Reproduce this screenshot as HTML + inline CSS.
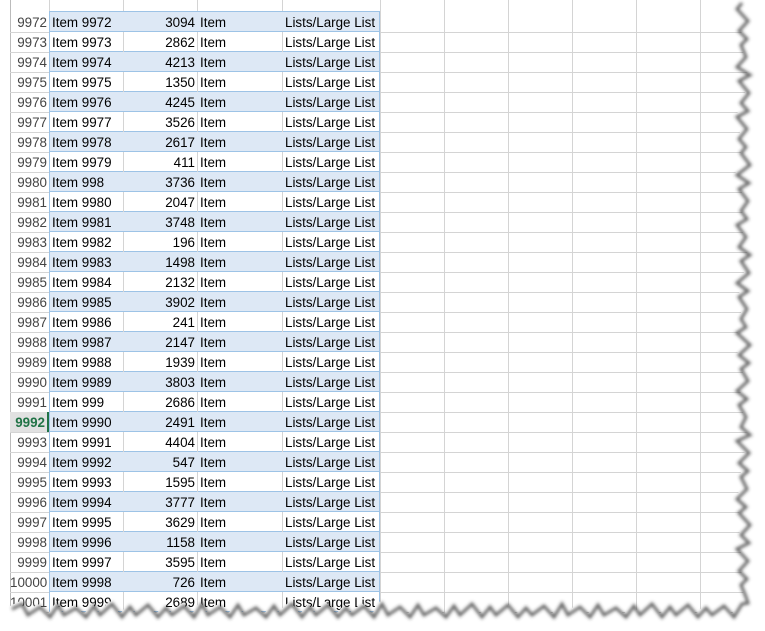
<!DOCTYPE html><html><head><style>
body{margin:0;width:765px;height:631px;background:#fff;position:relative;overflow:hidden;font-family:"Liberation Sans",sans-serif;font-size:13.4px;color:#000}
.c{position:absolute;height:20px;line-height:21px;box-sizing:border-box;white-space:nowrap;overflow:hidden}
.v{position:absolute;top:0;width:1px;height:631px;background:#d4d4d4}
.h{position:absolute;left:10px;width:740px;height:1px;background:#d4d4d4}
</style></head><body>
<div id="g"></div>
<svg width="765" height="631" style="position:absolute;left:0;top:0">
<defs><filter id="s" x="-10%" y="-10%" width="120%" height="120%"><feGaussianBlur stdDeviation="1.6"/></filter></defs>
<path id="mask" fill="#fff" fill-rule="evenodd" d=""/>
<path id="sh" fill="none" stroke="#333" stroke-width="3" stroke-opacity="0.75" filter="url(#s)" transform="translate(2,3)" d=""/>
</svg>
<script>
var g=document.getElementById('g'),h='';
var xs=[49,123,197,282,380,444,508,572,636,700];
xs.forEach(function(x){h+='<div class="v" style="left:'+x+'px"></div>'});
h+='<div class="v" style="left:10px;background:#bbb"></div>';
var data=[[9972,'Item 9972',3094],[9973,'Item 9973',2862],[9974,'Item 9974',4213],[9975,'Item 9975',1350],[9976,'Item 9976',4245],[9977,'Item 9977',3526],[9978,'Item 9978',2617],[9979,'Item 9979',411],[9980,'Item 998',3736],[9981,'Item 9980',2047],[9982,'Item 9981',3748],[9983,'Item 9982',196],[9984,'Item 9983',1498],[9985,'Item 9984',2132],[9986,'Item 9985',3902],[9987,'Item 9986',241],[9988,'Item 9987',2147],[9989,'Item 9988',1939],[9990,'Item 9989',3803],[9991,'Item 999',2686],[9992,'Item 9990',2491],[9993,'Item 9991',4404],[9994,'Item 9992',547],[9995,'Item 9993',1595],[9996,'Item 9994',3777],[9997,'Item 9995',3629],[9998,'Item 9996',1158],[9999,'Item 9997',3595],[10000,'Item 9998',726],[10001,'Item 9999',2689]];
data.forEach(function(r,i){var y=12+20*i,band=i%2==0;
 h+='<div class="h" style="top:'+(y+20)+'px"></div>';
 var sel=r[0]==9992;
 h+='<div class="c" style="left:10px;top:'+y+'px;width:39px;text-align:right;padding-right:2px;color:'+(sel?'#217346':'#444')+';'+(sel?'font-weight:bold;background:#e1e1e1;border-right:2px solid #217346;':'')+'">'+r[0]+'</div>';
 h+='<div class="c" style="left:49px;top:'+y+'px;width:331px;background:'+(band?'#dde8f5':'#fff')+';border-bottom:1px solid #9dc3e6;border-left:1px solid #9dc3e6;border-right:1px solid #9dc3e6"></div>';
 if(!band){[123,197,282].forEach(function(x){h+='<div style="position:absolute;left:'+x+'px;top:'+y+'px;width:1px;height:20px;background:#d4d4d4"></div>'});}
 h+='<div class="c" style="left:52px;top:'+y+'px">'+r[1]+'</div>';
 h+='<div class="c" style="left:123px;top:'+y+'px;width:72px;text-align:right">'+r[2]+'</div>';
 h+='<div class="c" style="left:200px;top:'+y+'px">Item</div>';
 h+='<div class="c" style="left:285px;top:'+y+'px">Lists/Large List</div>';
});
h+='<div style="position:absolute;left:49px;top:11px;width:331px;height:1px;background:#9dc3e6"></div>';
g.innerHTML=h;
var pts=[[740,0]];
var y=0,k=0;
while(y<592){y+=6+((k*7)%4)*2;var x=(k%2==0)?735+((k*13)%6):744+((k*17)%5);pts.push([x,y]);k++;}
pts.push([746,600]);
var x=746;k=0;
while(x>22){x-=6+((k*5)%4)*2;var yy=(k%2==0)?601+((k*11)%5):611+((k*7)%4);pts.push([x,yy]);k++;}
pts.push([10,606]);
var line=pts.map(function(p,i){return (i?'L':'M')+p[0]+' '+p[1]}).join(' ');
document.getElementById('mask').setAttribute('d','M0 0H765V631H0Z M10 0 '+line.replace(/^M/,'L')+' Z');
document.getElementById('sh').setAttribute('d',line);
</script>
</body></html>
